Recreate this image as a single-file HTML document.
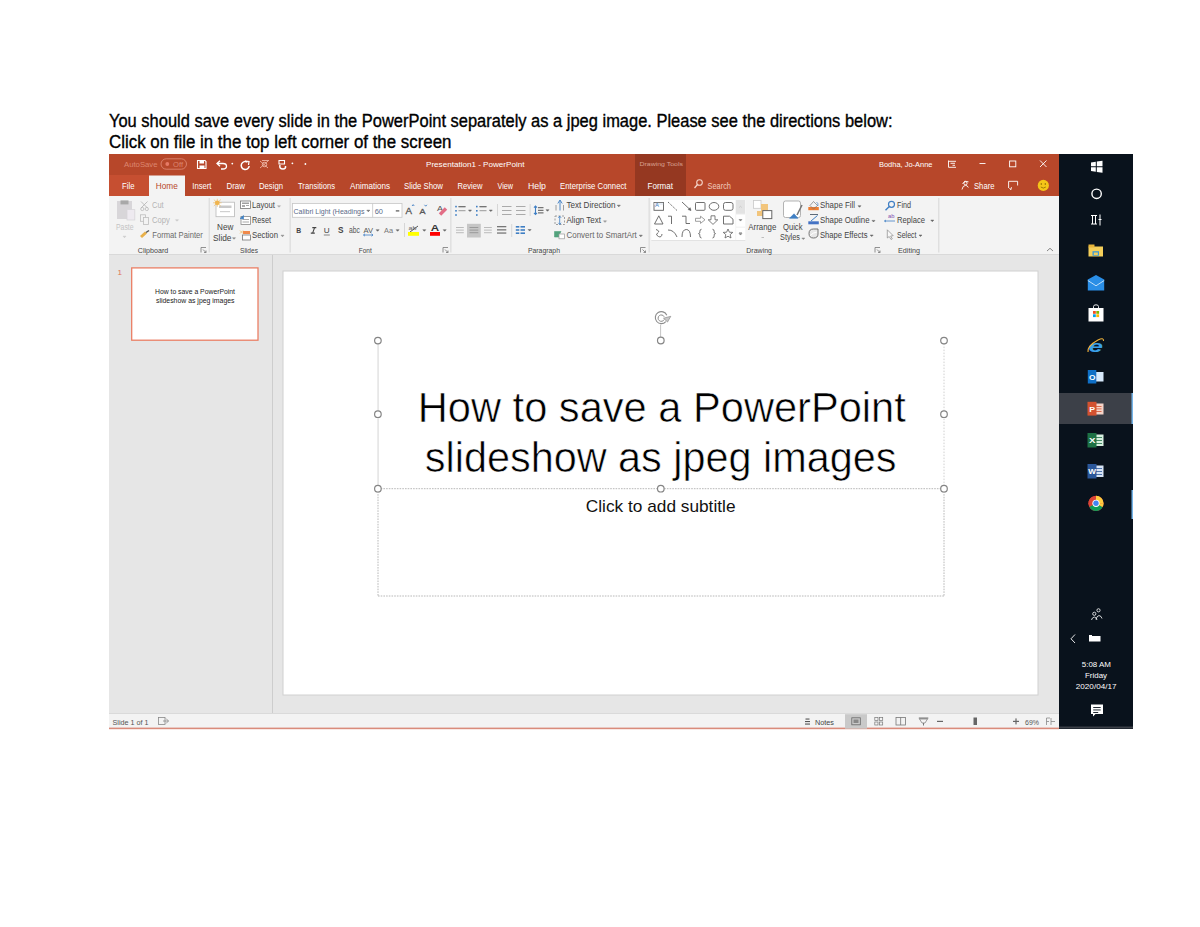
<!DOCTYPE html>
<html><head><meta charset="utf-8"><title>PowerPoint save as jpeg</title>
<style>
html,body{margin:0;padding:0;width:1200px;height:927px;overflow:hidden;background:#fff}
svg{display:block;font-family:"Liberation Sans",sans-serif}
</style></head><body>
<svg width="1200" height="927" viewBox="0 0 1200 927">
<text x="109" y="126.5" font-size="17.5" fill="#000" font-weight="normal" textLength="783.50" lengthAdjust="spacingAndGlyphs" font-family="Liberation Sans" stroke="#000" stroke-width="0.35">You should save every slide in the PowerPoint separately as a jpeg image. Please see the directions below:</text>
<text x="109" y="147.6" font-size="17.5" fill="#000" font-weight="normal" textLength="342.50" lengthAdjust="spacingAndGlyphs" font-family="Liberation Sans" stroke="#000" stroke-width="0.35">Click on file in the top left corner of the screen</text>
<rect x="109" y="154" width="1024" height="575" fill="#e6e6e6" />
<rect x="109" y="154" width="950" height="42" fill="#b7472a" />
<rect x="109" y="175" width="40" height="21" fill="#c64f31" />
<rect x="149" y="175.5" width="36" height="20.5" fill="#f3f3f3" />
<rect x="635" y="154" width="51" height="42" fill="#953821" />
<rect x="109" y="196" width="950" height="59" fill="#f3f3f3" />
<rect x="109" y="254" width="950" height="1" fill="#d9d9d9" />
<rect x="272" y="255" width="1" height="458" fill="#cdcdcd" />
<rect x="283" y="271" width="755" height="424" fill="#fff" stroke="#d0d0d0" stroke-width="1"/>
<rect x="131.7" y="267.9" width="126.3" height="72.3" fill="#fff" stroke="#ea7a5f" stroke-width="1.25"/>
<rect x="109" y="713" width="950" height="15" fill="#f3f3f3" />
<rect x="109" y="713" width="950" height="1" fill="#dadada" />
<rect x="109" y="727.6" width="950" height="1.6" fill="#d98b7b" />
<rect x="1059" y="154" width="74" height="575" fill="#09121c" />
<rect x="1059" y="393" width="74" height="31" fill="#3c4048" />
<rect x="1059" y="726.5" width="74" height="2" fill="#3b3f47" />
<text x="124" y="167" font-size="7.8" fill="#dc8670" font-weight="normal" textLength="33.50" lengthAdjust="spacingAndGlyphs" font-family="Liberation Sans" >AutoSave</text>
<rect x="161" y="158.8" width="25.5" height="10.4" fill="none" rx="5.2" stroke="#dc8670" stroke-width="0.9"/>
<circle cx="167.3" cy="164" r="1.9" fill="#e57a66"/>
<text x="173" y="167" font-size="7.8" fill="#dc8670" font-weight="normal" textLength="10.00" lengthAdjust="spacingAndGlyphs" font-family="Liberation Sans" >Off</text>
<path d="M197.5 160.5 H205 L206 161.5 V168.5 H197.5 Z" stroke="#fff" stroke-width="1.1" fill="none" />
<rect x="199.5" y="160.5" width="4.5" height="3" fill="#fff" />
<rect x="199.5" y="165.5" width="5" height="3" fill="#fff" />
<path d="M217.5 163.5 H223 Q226.5 163.5 226.5 166.2 Q226.5 169 223 169 H221" stroke="#fff" stroke-width="1.3" fill="none" />
<path d="M220 160.8 L217 163.5 L220 166.2" stroke="#fff" stroke-width="1.3" fill="none" />
<circle cx="232.3" cy="163.6" r="0.9" fill="#fff"/>
<path d="M247.5 162.2 A4 4 0 1 0 249.2 166" stroke="#fff" stroke-width="1.5" fill="none" />
<path d="M245 161 L249 161.5 L248.5 165" stroke="#fff" stroke-width="1.2" fill="none" />
<path d="M260 161 L268 168 M268 161 L260 168 M262 160.5 H269" stroke="#e8a898" stroke-width="1" fill="none" />
<circle cx="264.5" cy="164.5" r="2.2" fill="none" stroke="#f0c0b0" stroke-width="0.9"/>
<path d="M279 160.5 H284.5 V164 H279 Z" stroke="#fff" stroke-width="1.1" fill="none" />
<path d="M280 165 Q279 169 283 169 Q286 169 285.5 166" stroke="#fff" stroke-width="1.5" fill="none" />
<circle cx="292.4" cy="163.3" r="0.9" fill="#fff"/>
<circle cx="305.4" cy="164" r="0.9" fill="#fff"/>
<text x="426" y="167" font-size="7.8" fill="#fff" font-weight="normal" textLength="98.50" lengthAdjust="spacingAndGlyphs" font-family="Liberation Sans" >Presentation1  -  PowerPoint</text>
<text x="639.5" y="166.2" font-size="6" fill="#d9a090" font-weight="normal" textLength="43.50" lengthAdjust="spacingAndGlyphs" font-family="Liberation Sans" >Drawing Tools</text>
<text x="879" y="167" font-size="7.8" fill="#fff" font-weight="normal" textLength="53.50" lengthAdjust="spacingAndGlyphs" font-family="Liberation Sans" >Bodha, Jo-Anne</text>
<path d="M948.5 160.5 V167.3 H956 M948.5 161.3 H956 M950.5 163.3 H955 M952.5 165.3 H955" stroke="#fff" stroke-width="0.9" fill="none" />
<rect x="979.5" y="163" width="6" height="0.9" fill="#fff" />
<rect x="1009.6" y="161" width="6.2" height="5.8" fill="none" stroke="#fff" stroke-width="0.9"/>
<path d="M1040 160.5 L1046.5 167 M1046.5 160.5 L1040 167" stroke="#fff" stroke-width="0.9" fill="none" />
<text x="122" y="188.6" font-size="8.6" fill="#fff" font-weight="normal" textLength="12.50" lengthAdjust="spacingAndGlyphs" font-family="Liberation Sans" >File</text>
<text x="192.3" y="188.6" font-size="8.6" fill="#fff" font-weight="normal" textLength="19.20" lengthAdjust="spacingAndGlyphs" font-family="Liberation Sans" >Insert</text>
<text x="226.5" y="188.6" font-size="8.6" fill="#fff" font-weight="normal" textLength="18.50" lengthAdjust="spacingAndGlyphs" font-family="Liberation Sans" >Draw</text>
<text x="259" y="188.6" font-size="8.6" fill="#fff" font-weight="normal" textLength="24.00" lengthAdjust="spacingAndGlyphs" font-family="Liberation Sans" >Design</text>
<text x="298" y="188.6" font-size="8.6" fill="#fff" font-weight="normal" textLength="37.00" lengthAdjust="spacingAndGlyphs" font-family="Liberation Sans" >Transitions</text>
<text x="350" y="188.6" font-size="8.6" fill="#fff" font-weight="normal" textLength="40.00" lengthAdjust="spacingAndGlyphs" font-family="Liberation Sans" >Animations</text>
<text x="404" y="188.6" font-size="8.6" fill="#fff" font-weight="normal" textLength="39.00" lengthAdjust="spacingAndGlyphs" font-family="Liberation Sans" >Slide Show</text>
<text x="457.5" y="188.6" font-size="8.6" fill="#fff" font-weight="normal" textLength="25.00" lengthAdjust="spacingAndGlyphs" font-family="Liberation Sans" >Review</text>
<text x="497.5" y="188.6" font-size="8.6" fill="#fff" font-weight="normal" textLength="15.50" lengthAdjust="spacingAndGlyphs" font-family="Liberation Sans" >View</text>
<text x="528" y="188.6" font-size="8.6" fill="#fff" font-weight="normal" textLength="18.00" lengthAdjust="spacingAndGlyphs" font-family="Liberation Sans" >Help</text>
<text x="560" y="188.6" font-size="8.6" fill="#fff" font-weight="normal" textLength="66.50" lengthAdjust="spacingAndGlyphs" font-family="Liberation Sans" >Enterprise Connect</text>
<text x="647.5" y="188.6" font-size="8.6" fill="#fff" font-weight="normal" textLength="25.50" lengthAdjust="spacingAndGlyphs" font-family="Liberation Sans" >Format</text>
<text x="155.8" y="188.6" font-size="8.6" fill="#b7472a" font-weight="normal" textLength="22.00" lengthAdjust="spacingAndGlyphs" font-family="Liberation Sans" >Home</text>
<text x="707.5" y="188.6" font-size="8.6" fill="#f2cabd" font-weight="normal" textLength="23.50" lengthAdjust="spacingAndGlyphs" font-family="Liberation Sans" >Search</text>
<circle cx="699.5" cy="182.5" r="2.8" fill="none" stroke="#f5d5ca" stroke-width="1.1"/>
<path d="M697.5 184.5 L694.5 188" stroke="#f5d5ca" stroke-width="1.3" fill="none" />
<circle cx="965.5" cy="183.3" r="1.6" fill="none" stroke="#fff" stroke-width="0.9"/>
<path d="M962 189.5 Q962.5 185.8 965.5 185.3 Q967.5 185.5 968.3 187.5 M962.5 184 L965 181 M964.8 181.2 L968.5 181.8" stroke="#fff" stroke-width="0.9" fill="none" />
<text x="974" y="188.6" font-size="8.6" fill="#fff" font-weight="normal" textLength="20.50" lengthAdjust="spacingAndGlyphs" font-family="Liberation Sans" >Share</text>
<path d="M1008.6 188 V181.3 H1017.6 M1017.6 181.3 V185.5 M1009.5 188 L1010.8 189.8 L1011.5 187.2" stroke="#fff" stroke-width="0.9" fill="none" />
<circle cx="1043.3" cy="185.4" r="5.6" fill="#f5c518"/>
<circle cx="1041.3" cy="184" r="0.7" fill="#7a5a00"/><circle cx="1045.3" cy="184" r="0.7" fill="#7a5a00"/>
<path d="M1040.8 187 Q1043.3 189.2 1045.8 187" stroke="#7a5a00" stroke-width="0.7" fill="none" />
<rect x="117" y="201" width="15" height="18" fill="#d8d6d9" />
<rect x="120.5" y="200.4" width="8" height="4" fill="#a8a8a8" />
<rect x="127" y="209.6" width="7.8" height="10.4" fill="#eeeaf0" stroke="#d8d6d9" stroke-width="0.8"/>
<text x="116" y="229.8" font-size="8.3" fill="#c4c4c4" font-weight="normal" textLength="17.60" lengthAdjust="spacingAndGlyphs" font-family="Liberation Sans" >Paste</text>
<path d="M123.0 236.2 L124.5 237.8 L126.0 236.2 Z" stroke="#c8c8c8" stroke-width="0.5" fill="#c8c8c8" />
<path d="M141 201.5 L147.5 208 M147.5 201.5 L141 208" stroke="#b8b8b8" stroke-width="0.9" fill="none" />
<circle cx="142.3" cy="209" r="1.6" fill="none" stroke="#b8b8b8" stroke-width="0.8"/><circle cx="146.8" cy="209" r="1.6" fill="none" stroke="#b8b8b8" stroke-width="0.8"/>
<text x="152" y="208.3" font-size="8.3" fill="#b4b4b4" font-weight="normal" textLength="11.60" lengthAdjust="spacingAndGlyphs" font-family="Liberation Sans" >Cut</text>
<rect x="140.5" y="214.8" width="5" height="6.5" fill="none" stroke="#bdbdbd" stroke-width="0.8"/>
<rect x="143.5" y="217.5" width="5" height="7" fill="#f3f3f3" stroke="#bdbdbd" stroke-width="0.8"/>
<text x="152" y="222.9" font-size="8.3" fill="#b4b4b4" font-weight="normal" textLength="17.80" lengthAdjust="spacingAndGlyphs" font-family="Liberation Sans" >Copy</text>
<path d="M175.5 219.7 L177 221.3 L178.5 219.7 Z" stroke="#c8c8c8" stroke-width="0.5" fill="#c8c8c8" />
<path d="M141 237 L146 232.5" stroke="#e8b04a" stroke-width="3" fill="none" />
<path d="M146 232.5 L149 230.5" stroke="#555" stroke-width="1.5" fill="none" />
<text x="152.3" y="237.5" font-size="8.3" fill="#6a6a6a" font-weight="normal" textLength="50.50" lengthAdjust="spacingAndGlyphs" font-family="Liberation Sans" >Format Painter</text>
<text x="137.8" y="252.7" font-size="7.4" fill="#444" font-weight="normal" textLength="30.40" lengthAdjust="spacingAndGlyphs" font-family="Liberation Sans" >Clipboard</text>
<path d="M201 252.5 V247.5 H206" stroke="#777" stroke-width="0.8" fill="none" />
<path d="M203 249.5 L206 252.5 M206 250.5 V252.5 H204" stroke="#777" stroke-width="0.8" fill="none" />
<rect x="208.7" y="198" width="1" height="54.5" fill="#d6d6d6" />
<rect x="216" y="202.2" width="18.5" height="14.5" fill="#fff" stroke="#b9b9b9" stroke-width="0.8"/>
<rect x="219" y="205.5" width="12.5" height="2.5" fill="#c9c9c9" />
<rect x="220" y="211" width="10" height="1.2" fill="#d0d0d0" />
<circle cx="217.3" cy="202.8" r="2.4" fill="#f0b650"/>
<path d="M213.8 199.6 L220.8 206 M213.8 206 L220.8 199.6 M217.3 198.8 V206.8 M213 202.8 H221.6" stroke="#f0b650" stroke-width="0.6" fill="none" />
<text x="217" y="229.6" font-size="8.3" fill="#444" font-weight="normal" textLength="16.30" lengthAdjust="spacingAndGlyphs" font-family="Liberation Sans" >New</text>
<text x="213" y="240.7" font-size="8.3" fill="#444" font-weight="normal" textLength="18.50" lengthAdjust="spacingAndGlyphs" font-family="Liberation Sans" >Slide</text>
<path d="M232.5 237.7 L234 239.3 L235.5 237.7 Z" stroke="#888" stroke-width="0.5" fill="#888" />
<rect x="240.5" y="201" width="10" height="7.5" fill="#fff" stroke="#777" stroke-width="0.8"/>
<rect x="242" y="202.6" width="7" height="1.2" fill="#888" />
<rect x="242" y="205" width="3" height="2" fill="#aaa" />
<rect x="246" y="205" width="3" height="1" fill="#aaa" />
<text x="252" y="208.3" font-size="8.3" fill="#444" font-weight="normal" textLength="23.00" lengthAdjust="spacingAndGlyphs" font-family="Liberation Sans" >Layout</text>
<path d="M277.5 205.7 L279 207.3 L280.5 205.7 Z" stroke="#aaa" stroke-width="0.5" fill="#aaa" />
<rect x="241" y="216.5" width="9.5" height="8" fill="#fff" stroke="#888" stroke-width="0.8"/>
<rect x="242.5" y="219" width="6.5" height="1" fill="#aaa" />
<rect x="242.5" y="221.5" width="6.5" height="1" fill="#aaa" />
<path d="M240 218.5 L243.5 215.5 L243.5 219 Z" stroke="#3a7fc5" stroke-width="0.6" fill="#3a7fc5" />
<text x="252" y="223.3" font-size="8.3" fill="#444" font-weight="normal" textLength="19.00" lengthAdjust="spacingAndGlyphs" font-family="Liberation Sans" >Reset</text>
<rect x="242.5" y="235" width="8" height="5" fill="#fff" stroke="#777" stroke-width="0.8"/>
<rect x="243" y="231" width="7" height="3" fill="#f08a4b" />
<path d="M240 230.5 L243 233.5 M240 233.5 L243 230.5" stroke="#f0b650" stroke-width="0.7" fill="none" />
<text x="252" y="237.5" font-size="8.3" fill="#444" font-weight="normal" textLength="26.00" lengthAdjust="spacingAndGlyphs" font-family="Liberation Sans" >Section</text>
<path d="M281.0 235.2 L282.5 236.8 L284.0 235.2 Z" stroke="#888" stroke-width="0.5" fill="#888" />
<text x="240" y="252.7" font-size="7.4" fill="#444" font-weight="normal" textLength="18.00" lengthAdjust="spacingAndGlyphs" font-family="Liberation Sans" >Slides</text>
<rect x="289.6" y="198" width="1" height="54.5" fill="#d6d6d6" />
<rect x="292.5" y="203.5" width="109.5" height="13.8" fill="#fff" stroke="#c6c6c6" stroke-width="0.8"/>
<rect x="372.3" y="203.5" width="0.8" height="13.8" fill="#c6c6c6" />
<text x="293.5" y="213.5" font-size="7.6" fill="#5a6a88" font-weight="normal" textLength="71.00" lengthAdjust="spacingAndGlyphs" font-family="Liberation Sans" >Calibri Light (Headings</text>
<path d="M366.8 210.2 L368.3 211.8 L369.8 210.2 Z" stroke="#666" stroke-width="0.5" fill="#666" />
<text x="374.7" y="213.5" font-size="7.6" fill="#5a6a88" font-weight="normal" textLength="8.30" lengthAdjust="spacingAndGlyphs" font-family="Liberation Sans" >60</text>
<rect x="395.8" y="210.3" width="3.5" height="1.2" fill="#555" />
<text x="405.5" y="213.7" font-size="9" fill="#555" font-weight="normal" textLength="6.50" lengthAdjust="spacingAndGlyphs" font-family="Liberation Sans" stroke="#555" stroke-width="0.3">A</text>
<path d="M412 206 L413.2 204.6 L414.2 206" stroke="#3f7fc4" stroke-width="0.9" fill="none" />
<text x="419.5" y="213.7" font-size="8" fill="#555" font-weight="normal" textLength="6.00" lengthAdjust="spacingAndGlyphs" font-family="Liberation Sans" stroke="#555" stroke-width="0.3">A</text>
<path d="M424.5 204.8 L425.7 206.2 L426.9 204.8" stroke="#3f7fc4" stroke-width="0.9" fill="none" />
<text x="437" y="210.5" font-size="7" fill="#555" font-weight="normal" textLength="6.00" lengthAdjust="spacingAndGlyphs" font-family="Liberation Sans" >A</text>
<path d="M440 214.5 L446 208.5" stroke="#e26d86" stroke-width="3.4" fill="none" />
<text x="296.3" y="233.3" font-size="8" fill="#444" font-weight="bold" textLength="4.90" lengthAdjust="spacingAndGlyphs" font-family="Liberation Sans" >B</text>
<path d="M312.3 227.6 H316.3 M310.8 233.1 H314.8 M314.6 227.6 L312.6 233.1" stroke="#444" stroke-width="1.1" fill="none" />
<text x="323.8" y="233.3" font-size="8" fill="#444" font-weight="normal" textLength="5.90" lengthAdjust="spacingAndGlyphs" font-family="Liberation Sans" >U</text>
<rect x="323.8" y="234.6" width="6" height="0.8" fill="#666" />
<text x="338" y="233.3" font-size="8.5" fill="#444" font-weight="bold" textLength="5.50" lengthAdjust="spacingAndGlyphs" font-family="Liberation Sans" >S</text>
<text x="349" y="233.3" font-size="8.3" fill="#555" font-weight="normal" textLength="11.00" lengthAdjust="spacingAndGlyphs" font-family="Liberation Sans" >abc</text>
<text x="363.5" y="232.5" font-size="7.4" fill="#555" font-weight="normal" textLength="9.50" lengthAdjust="spacingAndGlyphs" font-family="Liberation Sans" >AV</text>
<path d="M363.5 235 H373 M365 233.8 L363.5 235 L365 236.2 M371.5 233.8 L373 235 L371.5 236.2" stroke="#3f7fc4" stroke-width="0.8" fill="none" />
<path d="M376.1 229.7 L377.6 231.3 L379.1 229.7 Z" stroke="#666" stroke-width="0.5" fill="#666" />
<text x="384" y="233" font-size="7.4" fill="#777" font-weight="normal" textLength="9.00" lengthAdjust="spacingAndGlyphs" font-family="Liberation Sans" >Aa</text>
<path d="M396.1 229.7 L397.6 231.3 L399.1 229.7 Z" stroke="#666" stroke-width="0.5" fill="#666" />
<rect x="404" y="223" width="1" height="14" fill="#d6d6d6" />
<text x="408.5" y="229.8" font-size="6" fill="#666" font-weight="normal" textLength="8.00" lengthAdjust="spacingAndGlyphs" font-family="Liberation Sans" >ab</text>
<path d="M410 232 L418 226" stroke="#555" stroke-width="1" fill="none" />
<rect x="408" y="232" width="11" height="3.8" fill="#ffff00" />
<path d="M422.8 229.7 L424.3 231.3 L425.8 229.7 Z" stroke="#666" stroke-width="0.5" fill="#666" />
<text x="430.8" y="231.2" font-size="9" fill="#333" font-weight="bold" textLength="8.40" lengthAdjust="spacingAndGlyphs" font-family="Liberation Sans" >A</text>
<rect x="430" y="232" width="10" height="3.8" fill="#ff0000" />
<path d="M443.2 229.7 L444.7 231.3 L446.2 229.7 Z" stroke="#666" stroke-width="0.5" fill="#666" />
<text x="358.8" y="252.7" font-size="7.4" fill="#444" font-weight="normal" textLength="13.00" lengthAdjust="spacingAndGlyphs" font-family="Liberation Sans" >Font</text>
<path d="M443 252.5 V247.5 H448" stroke="#777" stroke-width="0.8" fill="none" />
<path d="M445 249.5 L448 252.5 M448 250.5 V252.5 H446" stroke="#777" stroke-width="0.8" fill="none" />
<rect x="450.4" y="198" width="1" height="54.5" fill="#d6d6d6" />
<rect x="455.2" y="205.8" width="1.6" height="1.6" fill="#3f7fc4" />
<rect x="455.2" y="210.0" width="1.6" height="1.6" fill="#3f7fc4" />
<rect x="455.2" y="214.20000000000002" width="1.6" height="1.6" fill="#3f7fc4" />
<rect x="458.5" y="206.2" width="7" height="1" fill="#999" />
<rect x="458.5" y="210.2" width="7" height="1" fill="#999" />
<rect x="458.5" y="206.2" width="7" height="1" fill="#666" />
<path d="M468.5 210.0 L470 211.60000000000002 L471.5 210.0 Z" stroke="#666" stroke-width="0.5" fill="#666" />
<rect x="476" y="205.8" width="1.6" height="1.6" fill="#3f7fc4" />
<rect x="476" y="210.0" width="1.6" height="1.6" fill="#3f7fc4" />
<rect x="476" y="214.20000000000002" width="1.6" height="1.6" fill="#3f7fc4" />
<rect x="479.5" y="206.2" width="7" height="1" fill="#999" />
<rect x="479.5" y="210.2" width="7" height="1" fill="#999" />
<rect x="479.5" y="206.2" width="7" height="1" fill="#666" />
<path d="M489.3 210.0 L490.8 211.60000000000002 L492.3 210.0 Z" stroke="#666" stroke-width="0.5" fill="#666" />
<rect x="497" y="204" width="1" height="12" fill="#d6d6d6" />
<rect x="502" y="206" width="9.5" height="1" fill="#aaa" />
<rect x="502" y="210" width="9.5" height="1" fill="#aaa" />
<rect x="502" y="214" width="9.5" height="1" fill="#aaa" />
<rect x="516" y="206" width="9.5" height="1" fill="#aaa" />
<rect x="516" y="210" width="9.5" height="1" fill="#aaa" />
<rect x="516" y="214" width="9.5" height="1" fill="#aaa" />
<rect x="529.6" y="204" width="1" height="12" fill="#d6d6d6" />
<path d="M535.5 206.5 L535.5 214 M534 207.7 L535.5 206 L537 207.7 M534 212.8 L535.5 214.5 L537 212.8" stroke="#3f7fc4" stroke-width="1.1" fill="none" />
<rect x="538" y="207.2" width="5.5" height="1" fill="#555" />
<rect x="538" y="209.79999999999998" width="5.5" height="1" fill="#555" />
<rect x="538" y="212.39999999999998" width="5.5" height="1" fill="#555" />
<path d="M546.0 209.7 L547.5 211.3 L549.0 209.7 Z" stroke="#666" stroke-width="0.5" fill="#666" />
<rect x="456" y="227.0" width="7.8" height="1" fill="#bbb" />
<rect x="456" y="229.6" width="7.8" height="1" fill="#bbb" />
<rect x="456" y="232.2" width="7.8" height="1" fill="#bbb" />
<rect x="467" y="223.8" width="13.8" height="13.7" fill="#c6c6c6" />
<rect x="469.5" y="227.0" width="8.8" height="1" fill="#9a9a9a" />
<rect x="469.5" y="229.6" width="8.8" height="1" fill="#9a9a9a" />
<rect x="469.5" y="232.2" width="8.8" height="1" fill="#9a9a9a" />
<rect x="484" y="227.0" width="7.8" height="1" fill="#bbb" />
<rect x="484" y="229.6" width="7.8" height="1" fill="#bbb" />
<rect x="484" y="232.2" width="7.8" height="1" fill="#bbb" />
<rect x="497" y="226.0" width="9.3" height="1.3" fill="#777" />
<rect x="497" y="229.2" width="9.3" height="1.3" fill="#777" />
<rect x="497" y="232.4" width="9.3" height="1.3" fill="#777" />
<rect x="511.2" y="224" width="1" height="13" fill="#d6d6d6" />
<rect x="515.8" y="226.0" width="3.5" height="1.6" fill="#3f7fc4" />
<rect x="520.5" y="226.0" width="4.5" height="1.6" fill="#3f7fc4" />
<rect x="515.8" y="229.2" width="3.5" height="1.6" fill="#3f7fc4" />
<rect x="520.5" y="229.2" width="4.5" height="1.6" fill="#3f7fc4" />
<rect x="515.8" y="232.4" width="3.5" height="1.6" fill="#3f7fc4" />
<rect x="520.5" y="232.4" width="4.5" height="1.6" fill="#3f7fc4" />
<path d="M528.1 229.5 L529.6 231.10000000000002 L531.1 229.5 Z" stroke="#666" stroke-width="0.5" fill="#666" />
<path d="M560 210.5 V200.5 M557.8 203.5 L560 200 L562.2 203.5" stroke="#3f7fc4" stroke-width="0.9" fill="none" />
<path d="M556 210.5 V205 M563.5 210.5 V205" stroke="#888" stroke-width="0.8" fill="none" />
<text x="566.5" y="207.8" font-size="8.3" fill="#444" font-weight="normal" textLength="49.00" lengthAdjust="spacingAndGlyphs" font-family="Liberation Sans" >Text Direction</text>
<path d="M617.3 205.2 L618.8 206.8 L620.3 205.2 Z" stroke="#666" stroke-width="0.5" fill="#666" />
<rect x="555" y="216" width="9.5" height="8.5" fill="none" stroke="#888" stroke-width="0.8" stroke-dasharray="2 1.5"/>
<path d="M559.7 216 V224.5 M558.3 217.8 L559.7 216.2 L561.1 217.8 M558.3 222.8 L559.7 224.4 L561.1 222.8" stroke="#3f7fc4" stroke-width="0.8" fill="none" />
<text x="566.5" y="223.4" font-size="8.3" fill="#444" font-weight="normal" textLength="34.50" lengthAdjust="spacingAndGlyphs" font-family="Liberation Sans" >Align Text</text>
<path d="M603.5 220.79999999999998 L605 222.4 L606.5 220.79999999999998 Z" stroke="#999" stroke-width="0.5" fill="#999" />
<path d="M554.5 231.5 H561 L559.5 234.3 L561 237 H554.5 Z" stroke="#52a27c" stroke-width="0.6" fill="#52a27c" />
<rect x="559" y="234" width="5.5" height="4.8" fill="#fff" stroke="#999" stroke-width="0.7"/>
<text x="566.5" y="237.6" font-size="8.3" fill="#666" font-weight="normal" textLength="70.30" lengthAdjust="spacingAndGlyphs" font-family="Liberation Sans" >Convert to SmartArt</text>
<path d="M639.3 235.2 L640.8 236.8 L642.3 235.2 Z" stroke="#666" stroke-width="0.5" fill="#666" />
<text x="527.9" y="252.7" font-size="7.4" fill="#444" font-weight="normal" textLength="32.10" lengthAdjust="spacingAndGlyphs" font-family="Liberation Sans" >Paragraph</text>
<path d="M640.5 252.5 V247.5 H645.5" stroke="#777" stroke-width="0.8" fill="none" />
<path d="M642.5 249.5 L645.5 252.5 M645.5 250.5 V252.5 H643.5" stroke="#777" stroke-width="0.8" fill="none" />
<rect x="648.6" y="198" width="1" height="54.5" fill="#d6d6d6" />
<rect x="651.3" y="200" width="94" height="40.5" fill="#fff" />
<rect x="651.3" y="240" width="94" height="0.8" fill="#dedede" />
<rect x="736" y="200" width="9" height="13.8" fill="#e3e3e3" />
<rect x="736" y="213.8" width="9" height="0.6" fill="#e6e6e6" />
<rect x="736" y="226.8" width="9" height="0.6" fill="#e6e6e6" />
<rect x="735.6" y="200" width="0.5" height="40.5" fill="#ececec" />
<path d="M739.2 207.5 L740.5 206.3 L741.8 207.5" stroke="#bbb" stroke-width="0.6" fill="none" />
<path d="M739.0 219.5 L740.5 221.10000000000002 L742.0 219.5 Z" stroke="#777" stroke-width="0.5" fill="#777" />
<rect x="739" y="232.3" width="3" height="0.5" fill="#777" />
<path d="M739.0 233.5 L740.5 235.10000000000002 L742.0 233.5 Z" stroke="#777" stroke-width="0.5" fill="#777" />
<rect x="654" y="202.5" width="9.5" height="7.8" fill="none" stroke="#606060" stroke-width="0.9"/>
<rect x="654.4" y="202.9" width="8.7" height="2" fill="#e9eef5" />
<text x="655" y="206.5" font-size="5" fill="#3f7fc4" font-weight="normal" textLength="4.00" lengthAdjust="spacingAndGlyphs" font-family="Liberation Sans" >A</text>
<path d="M668 202 L677 210.5" stroke="#606060" stroke-width="0.9" fill="none" stroke-dasharray="1.4 0.8"/>
<path d="M682 202 L690.5 210" stroke="#606060" stroke-width="0.9" fill="none" />
<path d="M691 210.5 L688.2 209.6 L690.1 207.7 Z" stroke="#606060" stroke-width="0.6" fill="#606060" />
<rect x="695.5" y="202.5" width="9.5" height="7.8" fill="none" rx="1" stroke="#606060" stroke-width="0.9"/>
<ellipse cx="714" cy="206.4" rx="4.8" ry="3.9" fill="none" stroke="#606060" stroke-width="0.9"/>
<rect x="723.5" y="202.5" width="9.5" height="7.8" fill="none" rx="2" stroke="#606060" stroke-width="0.9"/>
<path d="M654.5 224 L658.8 215.8 L663 224 Z" stroke="#606060" stroke-width="0.9" fill="none" />
<path d="M668 216.2 H671.5 V224" stroke="#606060" stroke-width="0.9" fill="none" />
<path d="M682 216.2 H686 V223.5 H690" stroke="#606060" stroke-width="0.9" fill="none" />
<path d="M695.5 218.3 H700.5 V216.2 L705 219.8 L700.5 223.4 V221.3 H695.5 Z" stroke="#888" stroke-width="0.8" fill="none" />
<path d="M711 215.8 H715 V219.8 H717.8 L713 224.4 L708.2 219.8 H711 Z" stroke="#606060" stroke-width="0.8" fill="none" />
<path d="M723.5 216.2 H729.5 L733 219.2 V224 H723.5 Z" stroke="#606060" stroke-width="0.9" fill="none" />
<path d="M656 229.5 Q660.5 231 657.5 233 Q655 235 658.5 236.5 Q661.5 238 662 234" stroke="#606060" stroke-width="0.9" fill="none" />
<path d="M668 230 Q674 229.8 677 237" stroke="#606060" stroke-width="0.9" fill="none" />
<path d="M682 237 Q682 229.5 686.3 229.5 Q690.5 229.5 690.5 237" stroke="#606060" stroke-width="0.9" fill="none" />
<path d="M701.5 229.3 Q699.8 229.3 699.8 231.5 V232.8 L698.5 233.6 L699.8 234.4 V235.8 Q699.8 238 701.5 238" stroke="#606060" stroke-width="0.9" fill="none" />
<path d="M712.5 229.3 Q714.2 229.3 714.2 231.5 V232.8 L715.5 233.6 L714.2 234.4 V235.8 Q714.2 238 712.5 238" stroke="#606060" stroke-width="0.9" fill="none" />
<path d="M728 229 L729.4 232.2 L732.8 232.4 L730.2 234.6 L731 238 L728 236.2 L725 238 L725.8 234.6 L723.2 232.4 L726.6 232.2 Z" stroke="#606060" stroke-width="0.8" fill="none" />
<rect x="753.5" y="200.5" width="7.5" height="7.8" fill="#fff" stroke="#c9c9c9" stroke-width="0.8"/>
<rect x="761" y="204" width="7" height="7" fill="#f2c57c" />
<rect x="757" y="211" width="6" height="5" fill="#f2c57c" />
<rect x="762.8" y="210.6" width="9" height="8" fill="#fff" stroke="#666" stroke-width="1"/>
<text x="748.3" y="229.6" font-size="8.3" fill="#444" font-weight="normal" textLength="28.00" lengthAdjust="spacingAndGlyphs" font-family="Liberation Sans" >Arrange</text>
<rect x="761.5" y="237" width="2.5" height="0.6" fill="#999" />
<rect x="783.5" y="201" width="17" height="16.5" fill="#fff" rx="2" stroke="#aaa" stroke-width="0.9"/>
<path d="M789.5 218.3 L794 213.8 L798 218.3 Z" stroke="#3f7fc4" stroke-width="0.6" fill="#3f7fc4" />
<path d="M797 215 L802 205" stroke="#777" stroke-width="1.6" fill="none" />
<text x="783" y="229.6" font-size="8.3" fill="#444" font-weight="normal" textLength="19.50" lengthAdjust="spacingAndGlyphs" font-family="Liberation Sans" >Quick</text>
<text x="780" y="240.4" font-size="8.3" fill="#444" font-weight="normal" textLength="20.00" lengthAdjust="spacingAndGlyphs" font-family="Liberation Sans" >Styles</text>
<path d="M801.8 238.0 L803.3 239.60000000000002 L804.8 238.0 Z" stroke="#888" stroke-width="0.5" fill="#888" />
<rect x="808.3" y="207" width="10.5" height="3.2" fill="#ed7d31" />
<path d="M810 205.5 L813.5 201.5 L817.5 205.5 L813.5 209 Z" stroke="#777" stroke-width="0.7" fill="none" />
<path d="M816.5 202 Q818.8 203.5 817.8 206" stroke="#3f7fc4" stroke-width="0.7" fill="none" />
<text x="820" y="208.3" font-size="8.3" fill="#444" font-weight="normal" textLength="35.00" lengthAdjust="spacingAndGlyphs" font-family="Liberation Sans" >Shape Fill</text>
<path d="M858.0 205.7 L859.5 207.3 L861.0 205.7 Z" stroke="#666" stroke-width="0.5" fill="#666" />
<rect x="808.3" y="221.3" width="10.5" height="3" fill="#4472c4" />
<path d="M810 214.5 H818 M817.5 215.5 L811 221" stroke="#3f7fc4" stroke-width="1" fill="none" />
<rect x="810" y="214" width="8" height="0.8" fill="#666" />
<text x="820" y="222.9" font-size="8.3" fill="#444" font-weight="normal" textLength="49.50" lengthAdjust="spacingAndGlyphs" font-family="Liberation Sans" >Shape Outline</text>
<path d="M872.0 220.39999999999998 L873.5 222.0 L875.0 220.39999999999998 Z" stroke="#666" stroke-width="0.5" fill="#666" />
<path d="M809 233.5 Q809 229 813.5 229 H818 V234 Q818 238 813.5 238 Q809 238 809 233.5 Z" stroke="#666" stroke-width="0.9" fill="#e7e7e7" />
<path d="M810 235.5 Q813 232.5 817 232" stroke="#fff" stroke-width="1" fill="none" />
<text x="820" y="237.5" font-size="8.3" fill="#444" font-weight="normal" textLength="47.50" lengthAdjust="spacingAndGlyphs" font-family="Liberation Sans" >Shape Effects</text>
<path d="M870.2 235.0 L871.7 236.60000000000002 L873.2 235.0 Z" stroke="#666" stroke-width="0.5" fill="#666" />
<text x="746.3" y="252.7" font-size="7.4" fill="#444" font-weight="normal" textLength="25.70" lengthAdjust="spacingAndGlyphs" font-family="Liberation Sans" >Drawing</text>
<path d="M875 252.5 V247.5 H880" stroke="#777" stroke-width="0.8" fill="none" />
<path d="M877 249.5 L880 252.5 M880 250.5 V252.5 H878" stroke="#777" stroke-width="0.8" fill="none" />
<circle cx="891.5" cy="204.3" r="3" fill="none" stroke="#3f7fc4" stroke-width="1.2"/>
<path d="M889.3 206.5 L885.5 210.2" stroke="#3f7fc4" stroke-width="1.4" fill="none" />
<text x="897" y="208.3" font-size="8.3" fill="#444" font-weight="normal" textLength="14.00" lengthAdjust="spacingAndGlyphs" font-family="Liberation Sans" >Find</text>
<text x="888" y="218.4" font-size="5" fill="#7f4fb0" font-weight="normal" textLength="6.50" lengthAdjust="spacingAndGlyphs" font-family="Liberation Sans" >ab</text>
<path d="M884.5 221 H895 M886 220 L884.5 221 L886 222" stroke="#3f7fc4" stroke-width="0.8" fill="none" />
<text x="897" y="222.9" font-size="8.3" fill="#444" font-weight="normal" textLength="28.00" lengthAdjust="spacingAndGlyphs" font-family="Liberation Sans" >Replace</text>
<path d="M930.8 220.1 L932.3 221.70000000000002 L933.8 220.1 Z" stroke="#666" stroke-width="0.5" fill="#666" />
<path d="M887.3 229.8 V238 L889.2 236.5 L891 239.5 L892.3 238.8 L890.6 236 L893.2 235.7 Z" stroke="#888" stroke-width="0.7" fill="#f8f8f8" />
<text x="897" y="237.5" font-size="8.3" fill="#444" font-weight="normal" textLength="19.50" lengthAdjust="spacingAndGlyphs" font-family="Liberation Sans" >Select</text>
<path d="M919.0 235.0 L920.5 236.60000000000002 L922.0 235.0 Z" stroke="#666" stroke-width="0.5" fill="#666" />
<text x="898" y="252.7" font-size="7.4" fill="#444" font-weight="normal" textLength="22.00" lengthAdjust="spacingAndGlyphs" font-family="Liberation Sans" >Editing</text>
<rect x="938.3" y="198" width="1" height="54.5" fill="#d6d6d6" />
<path d="M1047 251 L1050 248.3 L1053 251" stroke="#777" stroke-width="0.9" fill="none" />
<text x="117.5" y="274.5" font-size="8" fill="#de7355" font-weight="normal" textLength="4.50" lengthAdjust="spacingAndGlyphs" font-family="Liberation Sans" >1</text>
<text x="155" y="294.2" font-size="6.6" fill="#1a1a1a" font-weight="normal" textLength="80.00" lengthAdjust="spacingAndGlyphs" font-family="Liberation Sans" >How to save a PowerPoint</text>
<text x="156" y="302.8" font-size="6.6" fill="#1a1a1a" font-weight="normal" textLength="78.50" lengthAdjust="spacingAndGlyphs" font-family="Liberation Sans" >slideshow as jpeg images</text>
<path d="M660.6 324.5 V337" stroke="#b5b5b5" stroke-width="0.8" fill="none" />
<path d="M666.8 315.2 A6 6 0 1 0 665.8 321.6" stroke="#8c8c8c" stroke-width="1.1" fill="none" />
<path d="M664.2 316.8 A3.2 3.2 0 1 0 664.2 319.5" stroke="#8c8c8c" stroke-width="1" fill="none" />
<path d="M663.5 318.2 L670.8 316.3 L667.5 322 Z" stroke="#8c8c8c" stroke-width="0.7" fill="#c8c8c8" />
<rect x="377.6" y="340.6" width="0.9" height="148" fill="#cfcfcf" />
<path d="M944 340.6 V488.7" stroke="#c4c4c4" stroke-width="0.8" fill="none" stroke-dasharray="1.5 1.5"/>
<path d="M378 488.7 H944 M378 596 H944 M378 488.7 V596 M944 488.7 V596" stroke="#b0b0b0" stroke-width="0.9" fill="none" stroke-dasharray="1.6 1.1"/>
<circle cx="377.9" cy="340.6" r="3.3" fill="#fff" stroke="#858585" stroke-width="1.2"/>
<circle cx="660.8" cy="340.5" r="3.3" fill="#fff" stroke="#858585" stroke-width="1.2"/>
<circle cx="944" cy="340.6" r="3.3" fill="#fff" stroke="#858585" stroke-width="1.2"/>
<circle cx="377.9" cy="414.2" r="3.3" fill="#fff" stroke="#858585" stroke-width="1.2"/>
<circle cx="944" cy="414.2" r="3.3" fill="#fff" stroke="#858585" stroke-width="1.2"/>
<circle cx="377.9" cy="488.7" r="3.3" fill="#fff" stroke="#858585" stroke-width="1.2"/>
<circle cx="660.8" cy="488.7" r="3.3" fill="#fff" stroke="#858585" stroke-width="1.2"/>
<circle cx="944" cy="488.7" r="3.3" fill="#fff" stroke="#858585" stroke-width="1.2"/>
<text x="417.8" y="422.2" font-size="43.2" fill="#000" font-weight="normal" textLength="488.00" lengthAdjust="spacingAndGlyphs" font-family="Liberation Sans" stroke="#fff" stroke-width="0.6">How to save a PowerPoint</text>
<text x="424.8" y="472.2" font-size="43.2" fill="#000" font-weight="normal" textLength="471.70" lengthAdjust="spacingAndGlyphs" font-family="Liberation Sans" stroke="#fff" stroke-width="0.6">slideshow as jpeg images</text>
<text x="585.8" y="512" font-size="16.2" fill="#111" font-weight="normal" textLength="149.70" lengthAdjust="spacingAndGlyphs" font-family="Liberation Sans" >Click to add subtitle</text>
<text x="112.5" y="724.5" font-size="6.8" fill="#555" font-weight="normal" textLength="36.00" lengthAdjust="spacingAndGlyphs" font-family="Liberation Sans" >Slide 1 of 1</text>
<rect x="158.5" y="717.5" width="6.5" height="7" fill="none" stroke="#888" stroke-width="0.8"/>
<path d="M163 721 L168.5 721 M166 718.5 L168.5 721 L166 723.5" stroke="#888" stroke-width="0.8" fill="none" />
<rect x="805.5" y="718.5" width="4" height="1.1" fill="#555" />
<rect x="805" y="721" width="5" height="1.1" fill="#555" />
<rect x="805" y="723.5" width="5" height="1.1" fill="#555" />
<text x="815" y="724.5" font-size="7" fill="#444" font-weight="normal" textLength="19.00" lengthAdjust="spacingAndGlyphs" font-family="Liberation Sans" >Notes</text>
<rect x="845" y="714.2" width="22" height="14.5" fill="#c9c9c9" />
<rect x="851.8" y="717.8" width="8.5" height="7" fill="none" stroke="#666" stroke-width="0.8"/>
<rect x="853.5" y="719.5" width="5" height="3.5" fill="#888" />
<rect x="874.8" y="717.5" width="3.2" height="3" fill="none" stroke="#777" stroke-width="0.7"/>
<rect x="879.5" y="717.5" width="3.2" height="3" fill="none" stroke="#777" stroke-width="0.7"/>
<rect x="874.8" y="722" width="3.2" height="3" fill="none" stroke="#777" stroke-width="0.7"/>
<rect x="879.5" y="722" width="3.2" height="3" fill="none" stroke="#777" stroke-width="0.7"/>
<rect x="896" y="717.5" width="9.5" height="7.5" fill="none" stroke="#777" stroke-width="0.8"/>
<rect x="900.3" y="717.5" width="0.8" height="7.5" fill="#777" />
<rect x="918.8" y="717.5" width="9.5" height="1.2" fill="#777" />
<path d="M919.5 719 H927.5 L925 723 H922 Z" stroke="#777" stroke-width="0.7" fill="none" />
<rect x="923" y="723" width="1" height="2.5" fill="#777" />
<rect x="937" y="720.8" width="6" height="1.2" fill="#666" />
<rect x="973.5" y="717.5" width="3.5" height="7.5" fill="#666" />
<rect x="1013" y="720.8" width="6" height="1.2" fill="#666" />
<rect x="1015.4" y="718.4" width="1.2" height="6" fill="#666" />
<text x="1025" y="724.5" font-size="7" fill="#555" font-weight="normal" textLength="14.00" lengthAdjust="spacingAndGlyphs" font-family="Liberation Sans" >69%</text>
<path d="M1046.5 718 V725 M1046.5 718 H1050 M1046.5 721.5 H1049 M1051 721.5 H1055 M1051 718 V725" stroke="#888" stroke-width="0.8" fill="none" />
<path d="M1091 162.5 L1095.8 161.8 V166.3 H1091 Z M1096.8 161.6 L1102.5 160.8 V166.3 H1096.8 Z M1091 167.3 H1095.8 V171.8 L1091 171.1 Z M1096.8 167.3 H1102.5 V172.8 L1096.8 172 Z" stroke="none" stroke-width="0" fill="#fff" />
<circle cx="1096.6" cy="193.8" r="4.7" fill="none" stroke="#fff" stroke-width="1.4"/>
<path d="M1091 215.5 H1097 M1091 224 H1097 M1092.5 215.5 V224 M1095.5 215.5 V224 M1100 214.5 V225.5 M1098.5 219.5 H1101.5" stroke="#fff" stroke-width="1" fill="none" />
<rect x="1088.5" y="246.5" width="14.5" height="10" fill="#f5cf5a" />
<rect x="1088.5" y="244.5" width="6" height="3" fill="#e8b53a" />
<rect x="1092.5" y="251.2" width="6.5" height="4.5" fill="#3a9ad9" />
<rect x="1093.8" y="252.5" width="4" height="2.5" fill="#f5cf5a" />
<path d="M1087.8 279.5 L1096 275 L1104.2 279.5 V290.5 H1087.8 Z" stroke="none" stroke-width="1" fill="#2a8ee6" />
<path d="M1087.8 280.5 L1096 285.8 L1104.2 280.5" stroke="#cfe8fb" stroke-width="0.9" fill="none" />
<path d="M1093.5 308 V306.5 Q1093.5 304.8 1096 304.8 Q1098.5 304.8 1098.5 306.5 V308" stroke="#fff" stroke-width="0.9" fill="none" />
<rect x="1088.5" y="308" width="15" height="13.5" fill="#fff" />
<rect x="1093" y="311" width="2.8" height="2.8" fill="#f25022" />
<rect x="1096.3" y="311" width="2.8" height="2.8" fill="#7fba00" />
<rect x="1093" y="314.3" width="2.8" height="2.8" fill="#00a4ef" />
<rect x="1096.3" y="314.3" width="2.8" height="2.8" fill="#ffb900" />
<text x="1088.5" y="352" font-size="17" fill="#3aa0e8" font-weight="bold" textLength="14.50" lengthAdjust="spacingAndGlyphs" font-family="Liberation Sans" font-style="italic">e</text>
<path d="M1088 352 Q1087 346 1098 340 Q1104 337 1103.5 341" stroke="#f0b23a" stroke-width="1.1" fill="none" />
<rect x="1094.5" y="372" width="9" height="9.5" fill="#d7e9fb" />
<rect x="1087.8" y="370" width="8.5" height="13.5" fill="#0f6fc6" />
<text x="1089" y="379.8" font-size="7" fill="#fff" font-weight="bold" textLength="6.50" lengthAdjust="spacingAndGlyphs" font-family="Liberation Sans" >O</text>
<rect x="1094.5" y="403.5" width="9" height="11" fill="#f6d4c8" />
<rect x="1095.5" y="406" width="6" height="0.8" fill="#d35230" />
<rect x="1095.5" y="408.5" width="6" height="0.8" fill="#d35230" />
<rect x="1095.5" y="411" width="6" height="0.8" fill="#d35230" />
<rect x="1087.5" y="401.8" width="9" height="13.8" fill="#d35230" />
<text x="1089.2" y="411.6" font-size="8" fill="#fff" font-weight="bold" textLength="5.80" lengthAdjust="spacingAndGlyphs" font-family="Liberation Sans" >P</text>
<rect x="1131.5" y="393" width="1.5" height="31" fill="#75b4e8" />
<rect x="1094.5" y="434.5" width="9" height="11.5" fill="#d7efdf" />
<rect x="1096" y="437" width="6" height="0.8" fill="#1e7145" />
<rect x="1096" y="440" width="6" height="0.8" fill="#1e7145" />
<rect x="1096" y="443" width="6" height="0.8" fill="#1e7145" />
<rect x="1087.5" y="433" width="9" height="14.5" fill="#1e7145" />
<text x="1089" y="443.3" font-size="8" fill="#fff" font-weight="bold" textLength="6.50" lengthAdjust="spacingAndGlyphs" font-family="Liberation Sans" >X</text>
<rect x="1094.5" y="465.5" width="9" height="11.5" fill="#d6e3f5" />
<rect x="1096" y="468" width="6" height="0.8" fill="#2b579a" />
<rect x="1096" y="471" width="6" height="0.8" fill="#2b579a" />
<rect x="1096" y="474" width="6" height="0.8" fill="#2b579a" />
<rect x="1087.5" y="464" width="9" height="14.5" fill="#2b579a" />
<text x="1088.3" y="474.3" font-size="7.5" fill="#fff" font-weight="bold" textLength="7.70" lengthAdjust="spacingAndGlyphs" font-family="Liberation Sans" >W</text>
<circle cx="1096" cy="503.3" r="7.6" fill="#db4437"/>
<path d="M1096 503.3 L1089.4 507.1 A7.6 7.6 0 0 1 1092.2 496.7 Z" stroke="none" stroke-width="1" fill="#db4437" />
<path d="M1096 503.3 L1102.6 507.1 A7.6 7.6 0 0 1 1089.4 507.1 Z" stroke="none" stroke-width="1" fill="#0f9d58" />
<path d="M1096 503.3 L1103.6 503.3 A7.6 7.6 0 0 1 1102.6 507.1 Z" stroke="none" stroke-width="1" fill="#ffcd40" />
<path d="M1096 503.3 L1096 495.7 A7.6 7.6 0 0 1 1103.6 503.3 Z" stroke="none" stroke-width="1" fill="#ffcd40" />
<circle cx="1096" cy="503.3" r="3.6" fill="#fff"/><circle cx="1096" cy="503.3" r="2.7" fill="#4285f4"/>
<rect x="1131.5" y="490" width="1.5" height="29" fill="#75b4e8" />
<circle cx="1098.5" cy="610.3" r="1.6" fill="none" stroke="#fff" stroke-width="0.8"/><circle cx="1094.3" cy="613.8" r="1.6" fill="none" stroke="#fff" stroke-width="0.8"/>
<path d="M1096 619.5 Q1096.5 616 1099 615.5 Q1101.5 616 1102 618.5 M1091.5 620 Q1092 617.5 1094.3 617 Q1096.5 617.5 1097 620" stroke="#fff" stroke-width="0.8" fill="none" />
<path d="M1075 634.5 L1071 638.8 L1075 643" stroke="#fff" stroke-width="0.9" fill="none" />
<rect x="1089" y="636" width="11.5" height="5.5" fill="#fff" />
<rect x="1089" y="635" width="3" height="1.5" fill="#fff" />
<text x="1081.8" y="666.5" font-size="7.6" fill="#fff" font-weight="normal" textLength="29.20" lengthAdjust="spacingAndGlyphs" font-family="Liberation Sans" >5:08 AM</text>
<text x="1085" y="678.2" font-size="7.4" fill="#fff" font-weight="normal" textLength="22.00" lengthAdjust="spacingAndGlyphs" font-family="Liberation Sans" >Friday</text>
<text x="1075.8" y="689.2" font-size="7.6" fill="#fff" font-weight="normal" textLength="40.70" lengthAdjust="spacingAndGlyphs" font-family="Liberation Sans" >2020/04/17</text>
<path d="M1091 704.5 H1103 V714 H1095.5 L1093 716.5 V714 H1091 Z" stroke="none" stroke-width="1" fill="#fff" />
<rect x="1093.2" y="707" width="7.5" height="0.9" fill="#09121c" />
<rect x="1093.2" y="709.5" width="7.5" height="0.9" fill="#09121c" />
<rect x="1093.2" y="712" width="5" height="0.9" fill="#09121c" />
</svg>
</body></html>
